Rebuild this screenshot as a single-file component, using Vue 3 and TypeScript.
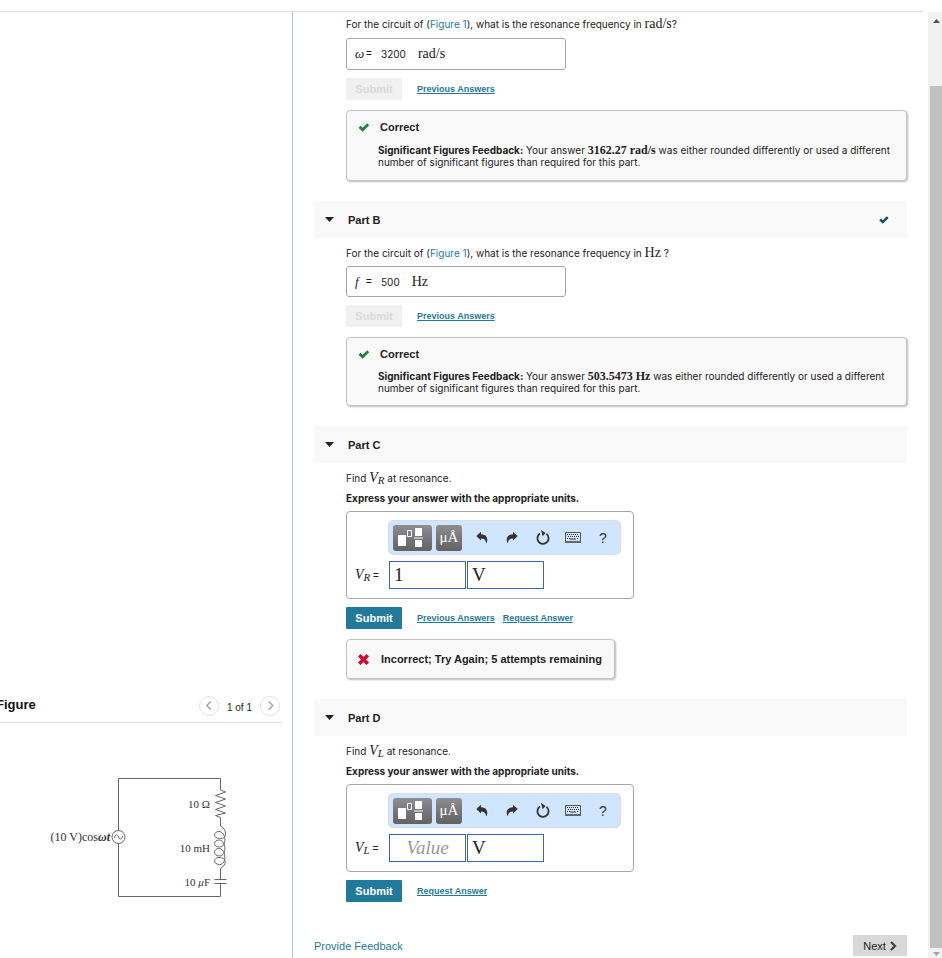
<script setup lang="ts">
import { ref } from 'vue'

interface SolvedPart {
  id: string
  title: string
  unit: string
  ending: string
  symbol: string
  answer: string
  exact: string
  tall: boolean
}

interface OpenPart {
  id: string
  title: string
  sub: string
  value: string
  unit: string
  previous: boolean
  error: string
}

const solved: SolvedPart[] = [
  { id: 'a', title: '', unit: 'rad/s', ending: '?', symbol: 'ω', answer: '3200', exact: '3162.27', tall: true },
  { id: 'b', title: 'Part B', unit: 'Hz', ending: ' ?', symbol: 'f', answer: '500', exact: '503.5473', tall: false },
]

const open = ref<OpenPart[]>([
  {
    id: 'c',
    title: 'Part C',
    sub: 'R',
    value: '1',
    unit: 'V',
    previous: true,
    error: 'Incorrect; Try Again; 5 attempts remaining',
  },
  { id: 'd', title: 'Part D', sub: 'L', value: '', unit: 'V', previous: false, error: '' },
])
</script>

<template>
  <div class="page">
    <div class="topline"></div>
    <div class="body">
      <aside class="side">
        <section class="figure">
          <header class="figure-head">
            <h2>Figure</h2>
            <nav class="pager">
              <button type="button" class="round" aria-label="Previous figure">
                <svg width="20" height="20" viewBox="0 0 20 20"><path d="M12 5 7.500 9.500 12 14" /></svg>
              </button>
              <span>1 of 1</span>
              <button type="button" class="round" aria-label="Next figure">
                <svg width="20" height="20" viewBox="0 0 20 20"><path d="M8.500 5 13 9.500 8.500 14" /></svg>
              </button>
            </nav>
          </header>
          <svg class="circuit" width="210" height="145" viewBox="40 765 210 145">
            <g fill="none" stroke="#666" stroke-width="1">
              <path d="M118.5 830.5V778.5H220.5V790L225.500 792 215.500 795.500 225.500 799 215.500 802.500 225.500 806 215.500 809.500 225.500 813 215.500 815.500 220.500 817.500V826" />
              <path
                d="M220.500 826C224 828 225.500 830 225.500 834C225.500 837.500 223 838.500 219.500 838.500C213 838.500 213 831.500 219 831.500C226 831.500 227.500 847 219.500 847C213 847 213 840 219 840C226 840 227.500 856 219.500 856C213 856 213 848.500 219 848.500C226 848.500 227.500 864.500 219.500 864.500C213 864.500 213 857.500 219 857.500C227 857.500 227 864.500 220.500 868.500V879.500"
              />
              <path d="M214.500 879.500H226.500M214.500 883.500H226.500M220.500 883.500V896.500H118.500V843.500" />
              <circle cx="118.500" cy="837" r="6.500" />
              <path d="M114.500 838C115.500 833.500 117.500 834.500 118.500 837S121.500 840.500 122.500 836" />
            </g>
            <g class="labels" text-anchor="end">
              <text class="source" x="110" y="841">(10 V)cos<tspan class="var">ωt</tspan></text>
              <text x="210" y="808">10 Ω</text>
              <text x="210" y="852">10 mH</text>
              <text x="210" y="886">10 <tspan class="mu">μ</tspan>F</text>
            </g>
          </svg>
        </section>
      </aside>

      <main class="main">
        <section v-for="p in solved" :key="p.id" class="part" :class="{ 'part--tall': p.tall, 'part--cont': !p.title }">
          <header v-if="p.title" class="part-head">
            <svg class="caret" width="9" height="5" viewBox="0 0 9 5"><path d="M0 0H9L4.500 5Z" /></svg>
            <h2>{{ p.title }}</h2>
            <svg class="done" width="10" height="8" viewBox="0 0 12 10"><path d="M0 5.200 2.200 3 4.500 5.300 9.600 0.300 11.800 2.400 4.500 9.600Z" /></svg>
          </header>
          <div class="content">
            <p class="prompt">
              For the circuit of (<a href="#figure">Figure 1</a>), what is the resonance frequency in
              <span class="math">{{ p.unit }}</span>{{ p.ending }}
            </p>
            <div class="answer">
              <span class="sym">{{ p.symbol }}</span><span class="eq">=</span><span class="num">{{ p.answer }}</span><span class="math">{{ p.unit }}</span>
            </div>
            <div class="actions">
              <button type="button" class="submit" disabled>Submit</button>
              <a href="#previous">Previous Answers</a>
            </div>
            <div class="feedback">
              <h3>
                <svg width="12" height="9" viewBox="0 0 12 10"><path fill="#1a8442" d="M0 5.200 2.200 3 4.500 5.300 9.600 0.300 11.800 2.400 4.500 9.600Z" /></svg>
                Correct
              </h3>
              <p>
                <b>Significant Figures Feedback:</b> Your answer <span class="exact">{{ p.exact }} {{ p.unit }}</span> was either
                rounded differently or used a different number of significant figures than required for this part.
              </p>
            </div>
          </div>
        </section>

        <section v-for="p in open" :key="p.id" class="part">
          <header class="part-head">
            <svg class="caret" width="9" height="5" viewBox="0 0 9 5"><path d="M0 0H9L4.500 5Z" /></svg>
            <h2>{{ p.title }}</h2>
          </header>
          <div class="content">
            <p class="prompt">Find <i class="math">V<sub>{{ p.sub }}</sub></i> at resonance.</p>
            <p class="prompt"><b>Express your answer with the appropriate units.</b></p>
            <div class="editor">
              <div class="toolbar">
                <button type="button" class="key key--wide" aria-label="Templates">
                  <svg width="38" height="26" viewBox="0 0 38 26">
                    <path fill="#fff" d="M5 10H13V21H5ZM22 3H29V11H22ZM22 15H29V22H22ZM21 12.500H30V13.500H21Z" />
                    <path fill="none" stroke="#fff" d="M14.500 5.500H18.500V11.500H14.500Z" />
                  </svg>
                </button>
                <button type="button" class="key">μÅ</button>
                <button type="button" class="tool" aria-label="Undo">
                  <svg width="12" height="13" viewBox="0 0 12 13"><path d="M0.300 5 5 0.800V3.200C9.500 3.200 11.500 6 11.300 9.500Q11 11.500 10 12.300C10 9.200 8.500 7.600 5 7.500V9.600Z" /></svg>
                </button>
                <button type="button" class="tool" aria-label="Redo">
                  <svg width="12" height="13" viewBox="0 0 12 13"><path d="M11.700 5 7 0.800V3.200C2.500 3.200 0.500 6 0.700 9.500Q1 11.500 2 12.300C2 9.200 3.500 7.600 7 7.500V9.600Z" /></svg>
                </button>
                <button type="button" class="tool" aria-label="Reset">
                  <svg width="14" height="15" viewBox="0 0 14 15">
                    <path fill="none" stroke="#333" stroke-width="1.800" d="M3.900 3.600A5.600 5.600 0 1 0 10.500 3.900" />
                    <path d="M5 0 9.600 2.900 6.600 6.200Z" />
                  </svg>
                </button>
                <button type="button" class="tool" aria-label="Keyboard">
                  <svg width="16" height="11" viewBox="0 0 16 11">
                    <path fill="none" stroke="#555" d="M0.500 0.500H15.500V9.500H0.500Z" />
                    <path d="M0 9H16V11H0Z" fill="#666" />
                    <path stroke="#333" stroke-dasharray="1 1" d="M2 2.500H14M3 4.500H14M2 6.500H5M12 6.500H14" />
                    <path stroke="#333" d="M5 7H11" />
                  </svg>
                </button>
                <button type="button" class="tool help" aria-label="Help">?</button>
              </div>
              <label class="name" :for="'value-' + p.id"><i>V<sub>{{ p.sub }}</sub></i> =</label>
              <div class="fields">
                <input :id="'value-' + p.id" v-model="p.value" type="text" placeholder="Value" />
                <input v-model="p.unit" type="text" aria-label="Units" />
              </div>
            </div>
            <div class="actions">
              <button type="button" class="submit">Submit</button>
              <a v-if="p.previous" href="#previous">Previous Answers</a>
              <a href="#request">Request Answer</a>
            </div>
            <div v-if="p.error" class="feedback feedback--error">
              <svg width="11" height="11" viewBox="0 0 11 11"><path fill="#d9002b" d="M2.500 0 5.500 3 8.500 0 11 2.500 8 5.500 11 8.500 8.500 11 5.500 8 2.500 11 0 8.500 3 5.500 0 2.500Z" /></svg>
              <b>{{ p.error }}</b>
            </div>
          </div>
        </section>

        <footer class="foot">
          <a href="#feedback">Provide Feedback</a>
          <button type="button" class="next">
            Next
            <svg width="7" height="10" viewBox="0 0 7 10"><path fill="none" stroke="#444" stroke-width="2.200" d="M1 1 5 5 1 9" /></svg>
          </button>
        </footer>
      </main>

      <div class="scroll" aria-hidden="true">
        <svg class="up" width="7" height="4" viewBox="0 0 7 4"><path fill="#505050" d="M0 4 3.500 0 7 4Z" /></svg>
        <div class="thumb"></div>
        <svg class="down" width="7" height="4" viewBox="0 0 7 4"><path fill="#a3a3a3" d="M0 0H7L3.500 4Z" /></svg>
      </div>
    </div>
  </div>
</template>

<style>
body {
  margin: 0;
  background: #fff;
}
</style>

<style scoped>
.page {
  box-sizing: border-box;
  display: flex;
  flex-direction: column;
  min-height: 100vh;
  padding-top: 11px;
  font: 11px/12px 'Liberation Sans', Arial, sans-serif;
  color: #222;
  overflow: hidden;
}
.page *,
.page *::before {
  box-sizing: border-box;
}
h2,
h3,
p {
  margin: 0;
}
a {
  color: #1f7a9c;
}
button {
  font-family: inherit;
  cursor: pointer;
}
.topline {
  height: 1px;
  margin-right: 19px;
  background: #ddd;
}
.body {
  display: flex;
  flex: 1;
}

/* figure pane */
.side {
  display: flex;
  flex-direction: column;
  justify-content: flex-end;
  flex: 0 0 293px;
  border-right: 1px solid #b4c6d8;
}
.figure {
  padding-bottom: 48px;
}
.figure-head {
  display: flex;
  justify-content: space-between;
  height: 33px;
  margin: 0 10px 42px -4px;
  border-bottom: 1px solid #ddd;
}
.figure-head h2 {
  font-size: 13px;
  line-height: 29px;
  color: #111;
}
.pager {
  display: flex;
  align-items: center;
  gap: 8px;
  height: 32px;
  padding-right: 2px;
}
.pager span {
  padding-top: 3px;
  font-size: 10px;
}
.round {
  width: 20px;
  height: 20px;
  padding: 0;
  border: 1px solid #e2e2e2;
  border-radius: 50%;
  background: #fff;
}
.round svg {
  display: block;
  width: 18px;
  height: 18px;
  fill: none;
  stroke: #aaa;
  stroke-width: 1.8;
}
.circuit {
  display: block;
  margin-left: 40px;
}
.labels {
  font: 11px 'Liberation Serif', serif;
  fill: #333;
}
.source {
  font-size: 12px;
}
.var {
  font-style: italic;
  font-weight: bold;
}
.mu {
  font-style: italic;
}

/* exercise parts */
.main {
  flex: 1;
  padding: 0 21px 2px;
}
.part {
  margin-bottom: 20px;
}
.part:last-of-type {
  margin-bottom: 0;
}
.part--cont {
  padding-top: 2px;
}
.part--cont .content {
  padding-top: 0;
}
.part--cont .prompt {
  margin-bottom: 4px;
}
.part-head {
  display: flex;
  align-items: center;
  height: 37px;
  padding: 0 18px 0 11px;
  background: #f9f9f9;
}
.part-head h2 {
  margin-left: 14px;
  font-size: 11px;
}
.caret {
  fill: #222;
}
.done {
  margin-left: auto;
  fill: #124f63;
}
.content {
  padding: 5px 0 0 32px;
}
.prompt,
.feedback p {
  font-family: Inter, 'Liberation Sans', sans-serif;
  font-size: 10px;
}
.prompt {
  height: 20px;
  line-height: 20px;
  white-space: nowrap;
}
.prompt a {
  text-decoration: none;
}
.math {
  font-family: 'Liberation Serif', serif;
  font-size: 14px;
  line-height: 12px;
}
sub {
  font-size: 11px;
  line-height: 0;
  vertical-align: -2px;
}
.answer {
  display: flex;
  align-items: center;
  width: 220px;
  height: 31px;
  margin-top: 3px;
  padding-left: 8px;
  border: 1px solid #a6a6a6;
  border-radius: 3px;
}
.sym {
  width: 11px;
  font: italic 13px 'Liberation Serif', serif;
}
.eq {
  width: 15px;
  font-size: 10px;
}
.num {
  margin-right: 12px;
  font-family: Inter, 'Liberation Sans', sans-serif;
  font-size: 10px;
}
.actions {
  display: flex;
  align-items: center;
  gap: 8px;
  margin-top: 8px;
}
.actions a {
  font-weight: bold;
  font-size: 9px;
}
.submit {
  width: 56px;
  height: 22px;
  margin-right: 7px;
  padding: 0;
  border: 0;
  border-radius: 1px;
  background: #217a9b;
  color: #fff;
  font-size: 11px;
  font-weight: bold;
}
.submit:disabled {
  background: #f0f0f0;
  color: #dadada;
}
.feedback {
  height: 69px;
  margin-top: 10px;
  padding: 9px 10px 0 11px;
  border: 1px solid #c4c4c4;
  border-radius: 4px;
  background: #f9f9f9;
  box-shadow: 1px 1px 2px #bbb;
}
.feedback h3 {
  display: flex;
  align-items: center;
  gap: 10px;
  height: 14px;
  font-size: 11px;
}
.feedback p {
  margin: 9px 0 0 20px;
}
.exact {
  font-family: 'Liberation Serif', serif;
  font-size: 12px;
  font-weight: bold;
  line-height: 10px;
}
.part--tall .answer {
  height: 32px;
}
.part--tall .feedback {
  height: 71px;
}
.part--tall .feedback p {
  margin-top: 10px;
}
.feedback--error {
  display: inline-flex;
  align-items: center;
  gap: 12px;
  height: 40px;
  padding: 0 12px 0 11px;
  vertical-align: top;
}
.editor {
  display: grid;
  grid-template-columns: 34px 1fr;
  row-gap: 6px;
  width: 288px;
  margin-top: 3px;
  padding: 8px 12px 9px 8px;
  border: 1px solid #a6a6a6;
  border-radius: 4px;
}
.toolbar {
  grid-column: 1 / -1;
  display: flex;
  align-items: center;
  height: 35px;
  margin-left: 33px;
  padding: 0 2px 0 4px;
  border: 1px solid #d8dde2;
  border-radius: 5px;
  background: #d0e5ff;
}
.key {
  width: 26px;
  height: 26px;
  margin-right: 5px;
  padding: 0;
  border: 0;
  border-radius: 3px;
  background: linear-gradient(#8d8d93, #626262);
  color: #fff;
  font: 15px 'Liberation Serif', serif;
}
.key--wide {
  width: 39px;
  margin-right: 4px;
}
.key svg {
  display: block;
}
.tool {
  display: flex;
  align-items: center;
  justify-content: center;
  flex: 1;
  height: 26px;
  padding: 0;
  border: 0;
  background: none;
  color: #333;
  fill: #333;
}
.help {
  font-size: 14px;
}
.name {
  align-self: center;
  font-size: 10px;
  white-space: nowrap;
}
.name i {
  font-family: 'Liberation Serif', serif;
  font-size: 14px;
}
.fields {
  display: flex;
  gap: 1px;
}
.fields input {
  width: 77px;
  height: 28px;
  padding: 0 4px;
  border: 1px solid #3d62c4;
  border-radius: 0;
  background: #fff;
  color: #222;
  font: 19px 'Liberation Serif', serif;
  outline: none;
}
.fields input::placeholder {
  color: #999;
  font-style: italic;
  text-align: center;
}
.foot {
  display: flex;
  align-items: center;
  justify-content: space-between;
  margin-top: 33px;
}
.foot a {
  text-decoration: none;
}
.next {
  display: flex;
  align-items: center;
  justify-content: center;
  gap: 4px;
  width: 54px;
  height: 21px;
  padding: 0;
  border: 0;
  border-radius: 1px;
  background: #d8d8d8;
  color: #222;
  font-size: 11px;
}

/* scroll track */
.scroll {
  display: flex;
  flex-direction: column;
  align-items: flex-end;
  flex: 0 0 14px;
  padding: 7px 0 2px;
  background: #f1f1f1;
}
.up,
.down {
  flex: none;
  margin-right: 2px;
}
.thumb {
  flex: 1;
  width: 12px;
  margin: 63px 0 4px;
  background: #c1c1c1;
}
</style>
